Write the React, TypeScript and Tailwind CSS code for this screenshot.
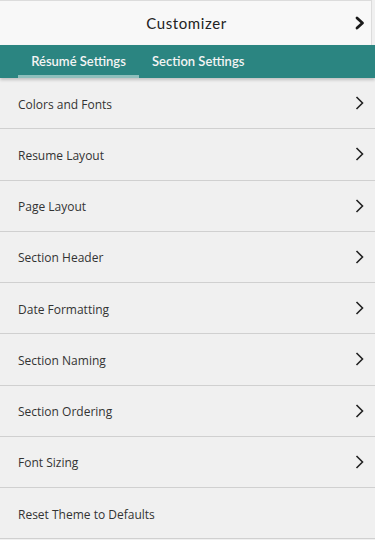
import React from 'react';

const items = [
  'Colors and Fonts',
  'Resume Layout',
  'Page Layout',
  'Section Header',
  'Date Formatting',
  'Section Naming',
  'Section Ordering',
  'Font Sizing',
];

function Chevron({ bold }: { bold?: boolean }) {
  return bold ? (
    <svg width="10" height="14" viewBox="0 0 10 14" fill="none">
      <path d="M2 2l5.5 5L2 12" stroke="#1a1a1a" strokeWidth="2.8" strokeLinecap="round" strokeLinejoin="round" />
    </svg>
  ) : (
    <svg width="9" height="14" viewBox="0 0 9 14" fill="none">
      <path d="M1.5 1l6 6-6 6" stroke="#222" strokeWidth="1.6" />
    </svg>
  );
}

export default function App() {
  return (
    <div className="w-[375px] h-[540px] overflow-hidden bg-[#f0f0f0] font-['Open_Sans',sans-serif]">
      <div className="h-[45px] flex items-center relative bg-[#f8f8f8] border-t border-[#dcdcdc] border-r mr-[3px]">
        <div className="flex-1 text-center text-[15px] text-[#222] font-['Lato',sans-serif] tracking-[0.6px] pl-[2px]">
          Customizer
        </div>
        <div className="absolute right-[6px] top-[15px]">
          <Chevron bold />
        </div>
      </div>
      <div className="h-[33px] bg-[#2b8581] flex items-stretch pl-[18px] shadow-[0_2px_3px_rgba(0,0,0,0.2)] relative z-10">
        <div className="w-[121px] flex items-center justify-center text-[13px] text-[#f4f4f4] font-semibold font-['Lato',sans-serif] border-b-[3px] border-[#8ebfbc] pt-[3px]">
          Résumé Settings
        </div>
        <div className="ml-[13px] flex items-center text-[13px] text-[#f4f4f4] font-semibold font-['Lato',sans-serif]">
          Section Settings
        </div>
      </div>
      <div>
        {items.map((t) => (
          <div key={t} className="h-[51.25px] flex items-center justify-between pl-[18px] pr-[11px] border-b border-[#d0d0d0] text-[12px] text-[#333]">
            <span className="pt-[3px]">{t}</span>
            <Chevron />
          </div>
        ))}
        <div className="h-[51.25px] flex items-center pl-[18px] border-b border-[#d0d0d0] text-[12px] text-[#333]">
          <span className="pt-[3px]">Reset Theme to Defaults</span>
        </div>
      </div>
    </div>
  );
}
